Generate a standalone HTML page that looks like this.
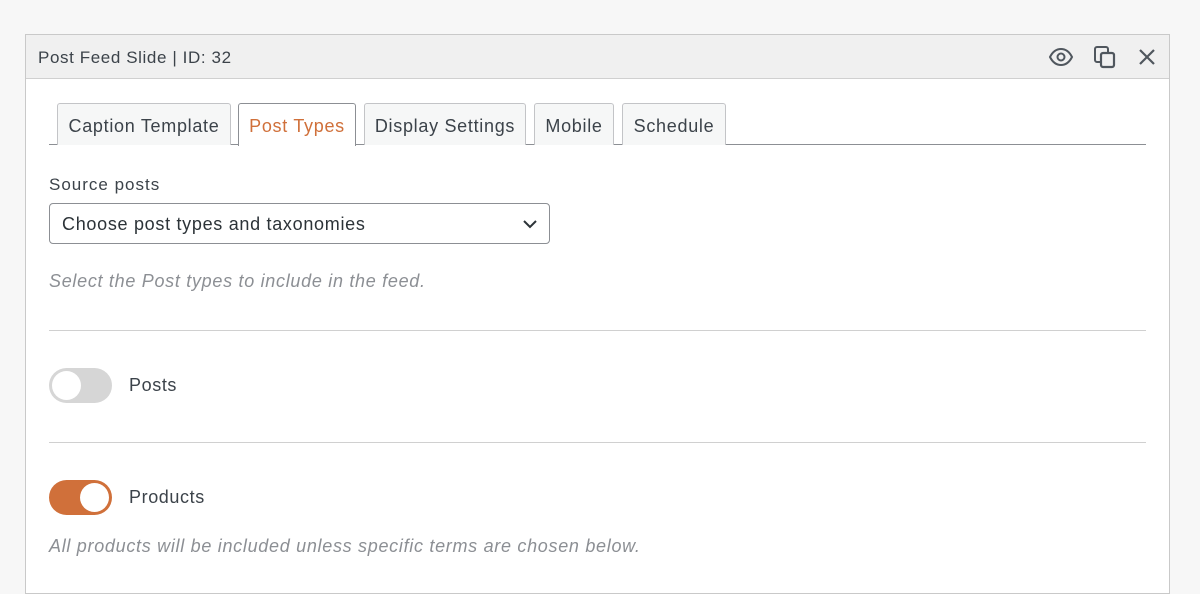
<!DOCTYPE html>
<html><head><style>
*{box-sizing:border-box;margin:0;padding:0}
body{width:1200px;height:571px;background:#f7f7f7;font-family:"Liberation Sans",sans-serif;color:#3c434a;overflow:hidden;position:relative;letter-spacing:0.6px}
.panel{position:absolute;left:25px;top:34px;width:1145px;height:560px;background:#fff;border:1px solid #c9c9c9}
.hdr{height:44px;background:#f0f0f0;border-bottom:1px solid #d0d0d0;position:relative}
.hdr .t{position:absolute;left:12px;top:13px;font-size:17px;color:#3c434a}
.tabs{position:absolute;left:23px;top:68px;width:1097px;height:42px;border-bottom:1px solid #8c8f94}
.tab{position:absolute;top:0;height:42px;border:1px solid #c3c4c7;border-bottom:none;background:#f6f7f7;border-radius:3px 3px 0 0;font-size:18px;padding-top:12px;text-align:center;color:#3c434a;letter-spacing:0.7px}
.tab.a{background:#fff;color:#d0703a;border-color:#8c8f94;height:43px}
.abs{position:absolute}
.sel{position:absolute;left:23px;top:168px;width:501px;height:41px;border:1px solid #8c8f94;border-radius:4px;font-size:18px;padding:10px 12px;color:#2c3338;letter-spacing:0.7px}
.hint{font-style:italic;color:#8c8f94;font-size:18px;letter-spacing:0.7px}
.hr{position:absolute;left:23px;width:1097px;height:1px;background:#d0d0d0}
.tg{position:absolute;left:23px;width:63px;height:35px;border-radius:18px}
.knob{position:absolute;top:3px;width:29px;height:29px;border-radius:50%;background:#fff}
</style></head><body>
<div class="panel">
 <div class="hdr"><span class="t">Post Feed Slide | ID: 32</span>
  <svg class="abs" style="left:1022px;top:11px" width="26" height="22" viewBox="0 0 26 22"><path d="M2 11C5 5 9 3 13 3s8 2 11 8c-3 6-7 8-11 8S5 17 2 11z" fill="none" stroke="#50575e" stroke-width="2"/><circle cx="13" cy="11" r="3.5" fill="none" stroke="#50575e" stroke-width="2"/></svg>
  <svg class="abs" style="left:1066px;top:10px" width="26" height="26" viewBox="0 0 26 26"><path d="M8 17H5a2 2 0 0 1-2-2V4a2 2 0 0 1 2-2h9a2 2 0 0 1 2 2v3" fill="none" stroke="#50575e" stroke-width="2"/><rect x="9" y="8" width="13" height="14" rx="2" fill="none" stroke="#50575e" stroke-width="2.2"/></svg>
  <svg class="abs" style="left:1111px;top:12px" width="20" height="20" viewBox="0 0 20 20"><path d="M3 3L17 17M17 3L3 17" stroke="#50575e" stroke-width="2.2"/></svg>
 </div>
 <div class="tabs">
  <div class="tab" style="left:8px;width:174px">Caption Template</div>
  <div class="tab a" style="left:189px;width:118px">Post Types</div>
  <div class="tab" style="left:315px;width:162px">Display Settings</div>
  <div class="tab" style="left:485px;width:80px">Mobile</div>
  <div class="tab" style="left:573px;width:104px">Schedule</div>
 </div>
 <div class="abs" style="left:23px;top:140px;font-size:17px;letter-spacing:1px">Source posts</div>
 <div class="sel">Choose post types and taxonomies
  <svg class="abs" style="left:472px;top:14px" width="16" height="12" viewBox="0 0 16 12"><path d="M2 3l6 6 6-6" fill="none" stroke="#2c3338" stroke-width="2"/></svg></div>
 <div class="abs hint" style="left:23px;top:236px">Select the Post types to include in the feed.</div>
 <div class="hr" style="top:295px"></div>
 <div class="tg" style="top:333px;background:#d6d6d6"><div class="knob" style="left:3px"></div></div>
 <div class="abs" style="left:103px;top:340px;font-size:18px">Posts</div>
 <div class="hr" style="top:407px"></div>
 <div class="tg" style="top:445px;background:#d0703a"><div class="knob" style="left:31px"></div></div>
 <div class="abs" style="left:103px;top:452px;font-size:18px">Products</div>
 <div class="abs hint" style="left:23px;top:501px">All products will be included unless specific terms are chosen below.</div>
</div>
</body></html>
